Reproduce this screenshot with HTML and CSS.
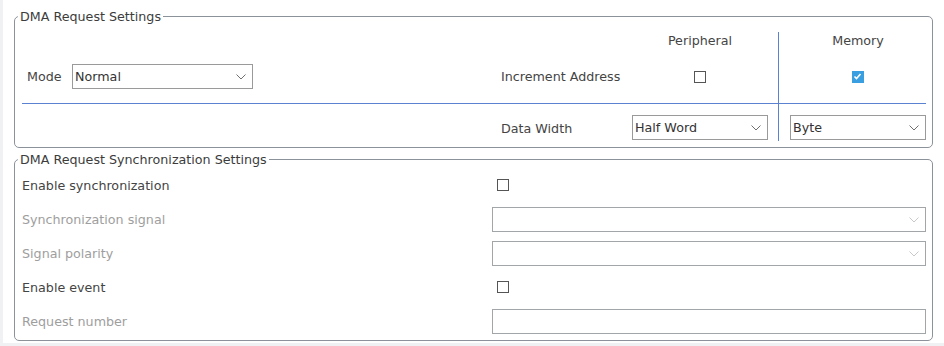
FILE: index.html
```html
<!DOCTYPE html>
<html lang="en">
<head>
    <meta charset="UTF-8">
    <title>DMA Request Settings</title>
    <link rel="stylesheet" href="styles.css">
</head>
<body>
    <div class="panel">
        <fieldset class="group request-group">
            <legend>DMA Request Settings</legend>
            <div class="request-grid">
                <div class="col-head periph-col">Peripheral</div>
                <div class="col-head mem-col">Memory</div>

                <div class="mode-field">
                    <span class="label mode-label">Mode</span>
                    <div class="combo mode-combo">
                        <span>Normal</span>
                        <svg class="chevron" width="10" height="6" viewBox="0 0 10 6"><polyline points="0.5,0.5 5,5 9.5,0.5"/></svg>
                    </div>
                </div>
                <div class="label row-label inc-row">Increment Address</div>
                <div class="cell periph-col inc-row"><span class="check"></span></div>
                <div class="cell mem-col inc-row">
                    <span class="check checked">
                        <svg width="11" height="11" viewBox="0 0 11 11"><polyline points="2.5,5.5 4.5,7.5 8.5,3"/></svg>
                    </span>
                </div>

                <div class="hline"></div>
                <div class="vline"></div>

                <div class="label row-label width-row">Data Width</div>
                <div class="combo periph-col width-row">
                    <span>Half Word</span>
                    <svg class="chevron" width="10" height="6" viewBox="0 0 10 6"><polyline points="0.5,0.5 5,5 9.5,0.5"/></svg>
                </div>
                <div class="combo mem-col width-row">
                    <span>Byte</span>
                    <svg class="chevron" width="10" height="6" viewBox="0 0 10 6"><polyline points="0.5,0.5 5,5 9.5,0.5"/></svg>
                </div>
            </div>
        </fieldset>

        <fieldset class="group sync-group">
            <legend>DMA Request Synchronization Settings</legend>
            <div class="sync-grid">
                <div class="label">Enable synchronization</div>
                <div class="cell-left"><span class="check"></span></div>

                <div class="label disabled">Synchronization signal</div>
                <div class="combo disabled">
                    <span></span>
                    <svg class="chevron" width="10" height="6" viewBox="0 0 10 6"><polyline points="0.5,0.5 5,5 9.5,0.5"/></svg>
                </div>

                <div class="label disabled">Signal polarity</div>
                <div class="combo disabled">
                    <span></span>
                    <svg class="chevron" width="10" height="6" viewBox="0 0 10 6"><polyline points="0.5,0.5 5,5 9.5,0.5"/></svg>
                </div>

                <div class="label">Enable event</div>
                <div class="cell-left"><span class="check"></span></div>

                <div class="label disabled">Request number</div>
                <div class="text-input"></div>
            </div>
        </fieldset>
    </div>
</body>
</html>
```

FILE: styles.css
```css
body {
    margin: 0;
    background: #f0f1f3;
    font-family: "DejaVu Sans", Verdana, sans-serif;
    font-size: 12.7px;
    color: #444;
}
.panel {
    margin-left: 3px;
    height: 343px;
    background: #fff;
    overflow: hidden;
}
.group {
    box-sizing: border-box;
    width: 919px;
    margin: 0 0 0 11px;
    border: 1px solid #8c9299;
    border-radius: 5px;
    padding: 8px 6px 6px 7px;
}
.group legend {
    padding: 0 2px;
    margin-left: -4px;
    line-height: 15px;
    height: 15px;
    color: #3c3c3c;
}
.request-group {
    margin-top: 9px;
}
.sync-group {
    margin-top: 4px;
    padding-top: 6px;
    padding-bottom: 7px;
}

/* request settings table */
.request-grid {
    display: grid;
    grid-template-columns: 479px 131px 136px 10px 1px 11px 136px;
    grid-template-rows: 18px 53px 1px 37px;
}
.col-head {
    grid-row: 1;
    text-align: center;
    line-height: 18px;
}
.periph-col {
    grid-column: 3;
}
.mem-col {
    grid-column: 7;
}
.inc-row {
    grid-row: 2;
}
.width-row {
    grid-row: 4;
}
.mode-field {
    grid-row: 2;
    grid-column: 1;
    display: flex;
    align-items: center;
    padding-left: 5px;
}
.mode-label {
    width: 45px;
}
.mode-combo {
    width: 181px;
    height: 23px;
}
.row-label {
    grid-column: 2;
    display: flex;
    align-items: center;
}
.width-row.row-label {
    align-items: flex-end;
    padding-bottom: 5px;
}
.cell {
    display: flex;
    align-items: center;
    justify-content: center;
}
.combo.width-row {
    align-self: end;
    margin-bottom: 1px;
}
.hline {
    grid-row: 3;
    grid-column: 1 / -1;
    height: 1px;
    background: #5b82d0;
}
.vline {
    grid-row: 1 / -1;
    grid-column: 5;
    background: #5b82d0;
}

/* controls */
.combo {
    box-sizing: border-box;
    height: 25px;
    border: 1px solid #9a9a9a;
    background: #fff;
    display: flex;
    align-items: center;
    justify-content: space-between;
    padding: 0 6px 0 2px;
    color: #333;
}
.chevron polyline {
    fill: none;
    stroke: #707070;
    stroke-width: 1;
}
.combo.disabled {
    border-color: #a3a6a9;
}
.combo.disabled .chevron polyline {
    stroke: #c9c9c9;
}
.text-input {
    box-sizing: border-box;
    height: 25px;
    border: 1px solid #a3a6a9;
    background: #fff;
}
.check {
    box-sizing: border-box;
    display: block;
    width: 12px;
    height: 12px;
    border: 1px solid #555;
    background: #fff;
}
.check.checked {
    border: none;
    background: #3a9fe0;
}
.check.checked svg {
    display: block;
}
.check.checked polyline {
    fill: none;
    stroke: #fff;
    stroke-width: 1.6;
}

/* synchronization settings */
.sync-grid {
    display: grid;
    grid-template-columns: 470px 434px;
    grid-auto-rows: 24px;
    row-gap: 10px;
}
.sync-grid .label {
    display: flex;
    align-items: center;
}
.label.disabled {
    color: #9e9e9e;
}
.cell-left {
    display: flex;
    align-items: center;
    padding-left: 5px;
}
```
